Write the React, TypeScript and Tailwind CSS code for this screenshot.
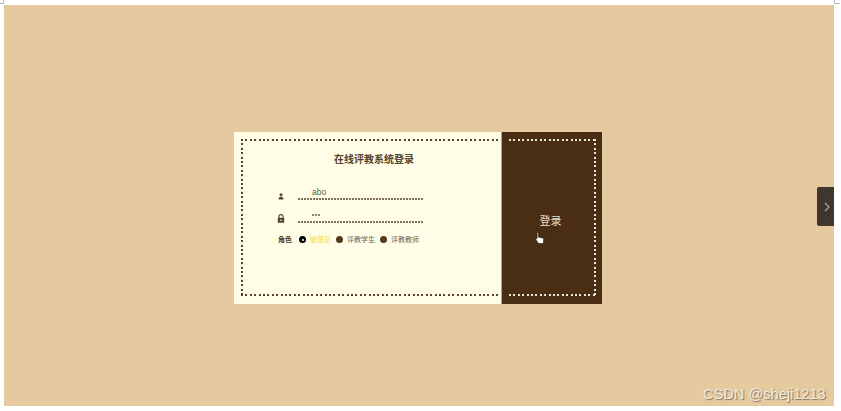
import React from "react";

const cjk = "font-['Noto_Sans_CJK_SC','Liberation_Sans',sans-serif]";

const RoleOption = ({ label, active }: { label: string; active?: boolean }) => (
  <div className="flex items-center">
    <span
      className={`w-[7px] h-[7px] rounded-full flex items-center justify-center ${
        active ? "bg-black" : "bg-[#553a1c]"
      }`}
    >
      {active && <span className="w-[2px] h-[2px] rounded-full bg-white" />}
    </span>
    <span className={`ml-[4px] text-[7px] leading-[9px] ${active ? "text-[#f5e040]" : "text-[#6b6150]"}`}>
      {label}
    </span>
  </div>
);

const App = () => {
  return (
    <div className={`relative w-[841px] h-[411px] bg-white overflow-hidden pt-[5px] pl-[4px] ${cjk}`}>
      {/* corner marks of the captured window */}
      <div className="absolute left-0 top-0 w-[4px] h-[4px] border-r border-b border-[#b8b8b8]" />
      <div className="absolute left-[834px] top-0 w-[6px] h-[4px] border-l border-b border-[#b8b8b8]" />

      <div className="w-[830px] h-[401px] bg-[#e5caa0] flex items-start pl-[230px] pt-[127px]">
        <div className="flex w-[368px] h-[172px]">
          <div className="w-[268px] h-full bg-[#fffde5] pl-[7px] pt-[7px] border-r border-[#b5a68c]">
            {/* frame dots: top, bottom, left */}
            <div className="w-[260px] h-[157px] pl-[2px] pt-[2px] flex flex-col [background:repeating-linear-gradient(90deg,#5a452c_0_2px,transparent_2px_4.4px)_top/100%_2px_no-repeat,repeating-linear-gradient(90deg,#5a452c_0_2px,transparent_2px_4.4px)_bottom/100%_2px_no-repeat,repeating-linear-gradient(180deg,#5a452c_0_2px,transparent_2px_4.4px)_left/2px_100%_no-repeat]">
              <h1 className="mt-[11px] ml-[91px] text-[10px] leading-[14px] font-bold text-[#54432d] whitespace-nowrap">
                在线评教系统登录
              </h1>
              <div className="mt-[20px] ml-[34px] flex items-end">
                <svg width="6" height="7" viewBox="0 0 6 7" className="ml-[1px]">
                  <circle cx="3" cy="1.8" r="1.5" fill="#54432d" />
                  <path d="M0.5 6.5 Q0.5 3.8 3 3.8 Q5.5 3.8 5.5 6.5 Z" fill="#54432d" />
                </svg>
                <div className="ml-[14px] w-[125px] h-[14px] pl-[14px] pt-[1px] text-[8.5px] leading-[10px] text-[#665a48] font-['Liberation_Sans',sans-serif] [background:repeating-linear-gradient(90deg,#7d6f5a_0_2px,transparent_2px_3px)_bottom/100%_2px_no-repeat]">
                  abo
                </div>
              </div>
              <div className="mt-[9px] ml-[34px] flex items-end">
                <svg width="8" height="9" viewBox="0 0 8 9">
                  <path d="M2 4 V2.6 A2 2 0 0 1 6 2.6 V4" fill="none" stroke="#54432d" strokeWidth="1.1" />
                  <rect x="0.8" y="3.8" width="6.4" height="5" rx="0.6" fill="#54432d" />
                  <circle cx="4" cy="6.2" r="0.8" fill="#fffde5" />
                </svg>
                <div className="ml-[13px] w-[125px] h-[14px] pl-[14px] pb-[2px] flex items-center gap-[1px] [background:repeating-linear-gradient(90deg,#7d6f5a_0_2px,transparent_2px_3px)_bottom/100%_2px_no-repeat]">
                  <span className="w-[2px] h-[2px] rounded-full bg-[#665a48]" />
                  <span className="w-[2px] h-[2px] rounded-full bg-[#665a48]" />
                  <span className="w-[2px] h-[2px] rounded-full bg-[#665a48]" />
                </div>
              </div>
              <div className="mt-[12px] ml-[35px] flex items-center">
                <span className="text-[7px] leading-[9px] font-bold text-[#4a3e2c]">角色</span>
                <div className="ml-[7px] flex items-center gap-[5px]">
                  <RoleOption label="管理员" active />
                  <RoleOption label="评教学生" />
                  <RoleOption label="评教教师" />
                </div>
              </div>
            </div>
          </div>

          <div className="w-[100px] h-full bg-[#4a2e14] pl-[7px] pt-[7px]">
            {/* frame dots: top, bottom, right */}
            <div className="w-[87px] h-[157px] flex items-center justify-center [background:repeating-linear-gradient(90deg,#eee8da_0_2px,transparent_2px_4.4px)_top/100%_2px_no-repeat,repeating-linear-gradient(90deg,#eee8da_0_2px,transparent_2px_4.4px)_bottom/100%_2px_no-repeat,repeating-linear-gradient(180deg,#eee8da_0_2px,transparent_2px_4.4px)_right/2px_100%_no-repeat]">
              <button className="text-[11px] leading-[14px] text-[#e8dfcd] mt-[4px] mr-[4px]">登录</button>
            </div>
          </div>
        </div>
      </div>

      {/* hand cursor over the button */}
      <svg width="10" height="13" viewBox="0 0 10 13" className="absolute left-[535px] top-[232px]">
        <path
          d="M2 1.2 C2 .4 3.3 .4 3.3 1.2 V5 L7.5 6 C8.6 6.3 8.8 7 8.7 8 L8.3 11.5 H3.5 L.8 7.5 C.4 6.8 1.3 6.2 2 6.8 Z"
          fill="#ffffff"
          stroke="#222222"
          strokeWidth="0.7"
        />
      </svg>

      {/* collapsed side panel handle */}
      <div className="absolute left-[817px] top-[187px] w-[17px] h-[39px] bg-[#3f372e] rounded-l-[2px] flex items-center justify-center pl-[3px]">
        <svg width="6" height="10" viewBox="0 0 6 10">
          <path d="M1 1 L5 5 L1 9" fill="none" stroke="#a8a49c" strokeWidth="1.2" />
        </svg>
      </div>

      <div className="absolute left-[703px] top-[385px] text-[14.6px] leading-[18px] text-[#f2ece0] [text-shadow:1px_1px_1px_rgba(90,80,60,0.75)] font-['Liberation_Sans',sans-serif] whitespace-nowrap">
        CSDN @sheji1213
      </div>
    </div>
  );
};

export default App;
